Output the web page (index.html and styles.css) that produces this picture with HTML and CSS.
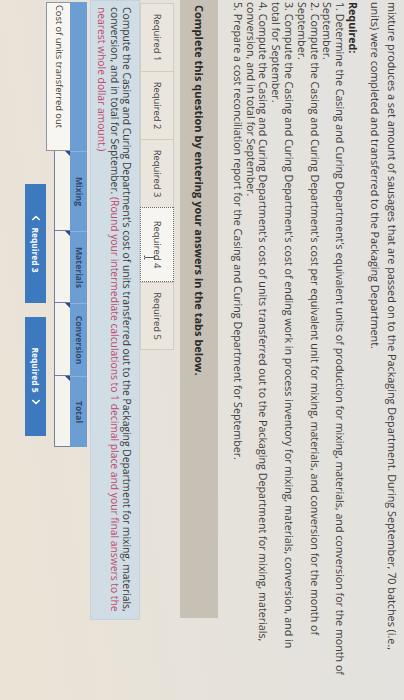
FILE: index.html
```html
<!DOCTYPE html>
<html lang="en">
<head>
<meta charset="utf-8">
<title>Casing and Curing Department</title>
<link rel="stylesheet" href="styles.css">
</head>
<body>
<div class="frame">
<div class="stage">
  <div class="problem">
    <p class="lead">mixture produces a set amount of sausages that are passed on to the Packaging Department. During September, 70 batches (i.e.,<br>units) were completed and transferred to the Packaging Department.</p>
    <p class="req-title">Required:</p>
    <ol class="req-list">
      <li>1. Determine the Casing and Curing Department's equivalent units of production for mixing, materials, and conversion for the month of<br>September.</li>
      <li>2. Compute the Casing and Curing Department's cost per equivalent unit for mixing, materials, and conversion for the month of<br>September.</li>
      <li>3. Compute the Casing and Curing Department's cost of ending work in process inventory for mixing, materials, conversion, and in<br>total for September.</li>
      <li>4. Compute the Casing and Curing Department's cost of units transferred out to the Packaging Department for mixing, materials,<br>conversion, and in total for September.</li>
      <li>5. Prepare a cost reconciliation report for the Casing and Curing Department for September.</li>
    </ol>
  </div>

  <div class="question">
    <div class="banner">Complete this question by entering your answers in the tabs below.</div>

    <div class="tabs">
      <div class="tab">Required 1</div>
      <div class="tab">Required 2</div>
      <div class="tab">Required 3</div>
      <div class="tab active">Required 4
        <svg class="ibeam" width="5" height="11" viewBox="0 0 5 11"><path d="M0.5 0.5h1.5l0.5 0.6l0.5-0.6h1.5M2.5 1.1v8.8M0.5 10.5h1.5l0.5-0.6l0.5 0.6h1.5" fill="none" stroke="#333333" stroke-width="0.8"/></svg>
      </div>
      <div class="tab">Required 5</div>
    </div>

    <div class="instructions">Compute the Casing and Curing Department's cost of units transferred out to the Packaging Department for mixing, materials,<br>conversion, and in total for September. <span class="note">(Round your intermediate calculations to 1 decimal place and your final answers to the<br>nearest whole dollar amount.)</span></div>

    <div class="grid">
      <div class="head"></div>
      <div class="head col">Mixing</div>
      <div class="head col">Materials</div>
      <div class="head col">Conversion</div>
      <div class="head col">Total</div>

      <div class="label">Cost of units transferred out</div>
      <div class="input"></div>
      <div class="input"></div>
      <div class="input"></div>
      <div class="input"></div>
    </div>

    <div class="nav">
      <div class="btn">
        <svg class="chev" width="6" height="8" viewBox="0 0 6 8"><polyline points="4.5,0.8 1.5,4 4.5,7.2" fill="none" stroke="#ffffff" stroke-width="1.6" stroke-linecap="round" stroke-linejoin="round"/></svg>
        <span>Required 3</span>
      </div>
      <div class="btn">
        <span>Required 5</span>
        <svg class="chev" width="6" height="8" viewBox="0 0 6 8"><polyline points="1.5,0.8 4.5,4 1.5,7.2" fill="none" stroke="#ffffff" stroke-width="1.6" stroke-linecap="round" stroke-linejoin="round"/></svg>
      </div>
    </div>
  </div>
</div>
</div>
</body>
</html>
```

FILE: styles.css
```css
html, body {
  margin: 0;
  padding: 0;
  width: 404px;
  height: 700px;
  overflow: hidden;
  background: #e6e2da;
}

.frame {
  width: 404px;
  height: 700px;
  overflow: hidden;
}

.stage {
  width: 700px;
  height: 404px;
  transform-origin: 0 0;
  transform: translateX(404px) rotate(90deg);
  overflow: hidden;
  box-sizing: border-box;
  font-family: "Open Sans", "DejaVu Sans", sans-serif;
  color: #3b3b3b;
  background: linear-gradient(172deg, #e3e2df 0%, #e5e2dc 45%, #ebe3d5 100%);
}

.problem {
  padding: 3px 0 0 2px;
  white-space: nowrap;
}

.lead {
  margin: 0;
  font-size: 10.8px;
  line-height: 17px;
}

.req-title {
  margin: 8px 0 0 0;
  font-size: 10.7px;
  line-height: 12.8px;
  font-weight: 700;
  color: #2c2c2c;
}

.req-list {
  margin: 0;
  padding: 0;
  list-style: none;
  font-size: 10.7px;
  line-height: 12.8px;
}

.question {
  width: 618px;
  margin-top: 13px;
}

.banner {
  height: 38px;
  background: #c7c0b4;
  box-sizing: border-box;
  padding: 12px 0 0 5px;
  font-size: 11px;
  line-height: 13px;
  font-weight: 700;
  color: #2a2a2a;
  white-space: nowrap;
}

.tabs {
  display: flex;
  margin: 6px 0 0 3px;
  height: 34px;
}

.tab {
  position: relative;
  width: 68px;
  height: 34px;
  box-sizing: border-box;
  background: #ebe6dd;
  border: 1px solid #d2ccc1;
  border-right: none;
  display: flex;
  align-items: center;
  justify-content: center;
  font-size: 9.4px;
  color: #444444;
  white-space: nowrap;
}

.tab:last-child {
  border-right: 1px solid #d2ccc1;
}

.tab.active {
  width: 75px;
  background: #f7f5f1;
  border: 1px dotted #6a6a6a;
}

.ibeam {
  position: absolute;
  left: 47px;
  top: 18px;
}

.instructions {
  width: 620px;
  height: 50px;
  box-sizing: border-box;
  background: #d0dde5;
  border: 1px solid #c3d2dc;
  padding: 6px 0 0 6px;
  font-size: 10.3px;
  line-height: 12.5px;
  white-space: nowrap;
  color: #3a3a3a;
}

.note {
  color: #c4496c;
}

.grid {
  display: grid;
  grid-template-columns: 149px 80px 72px 73px 71px;
  grid-template-rows: 17px 24px;
  align-items: start;
  margin: 3px 0 0 2px;
  width: 445px;
}

.head {
  height: 17px;
  background: #6c9dd3;
  font-size: 8.7px;
  font-weight: 700;
  color: #34496e;
  display: flex;
  align-items: center;
  justify-content: center;
  box-sizing: border-box;
}

.head.col {
  border-left: 1px solid #8db3dd;
}

.label {
  height: 24px;
  box-sizing: border-box;
  border: 1px solid #8d95a3;
  border-top: none;
  background: #f8f6f2;
  padding-left: 2px;
  font-size: 9.3px;
  line-height: 21px;
  color: #3a3a3a;
  white-space: nowrap;
}

.input {
  position: relative;
  height: 16px;
  box-sizing: border-box;
  border: 1px solid #71819c;
  border-top: none;
  border-left: none;
  background: #f5f3ee;
}

.input::before {
  content: "";
  position: absolute;
  top: 0;
  left: 0;
  width: 0;
  height: 0;
  border-top: 5px solid #2b4c8c;
  border-right: 5px solid transparent;
}

.nav {
  display: flex;
  justify-content: center;
  gap: 14px;
  padding-left: 2px;
}

.btn {
  width: 119px;
  height: 21px;
  background: #3d79bf;
  color: #ffffff;
  display: flex;
  align-items: center;
  justify-content: center;
  gap: 7px;
  font-size: 8.4px;
  font-weight: 700;
}

.chev {
  display: block;
}
```
